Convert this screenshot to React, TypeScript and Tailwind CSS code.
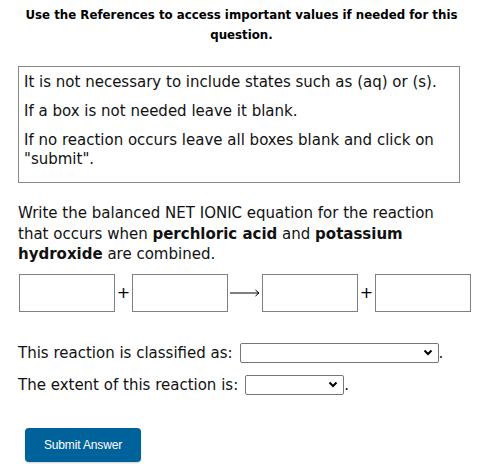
import React from 'react';

const Box = () => (
  <div className="w-[96px] h-[38px] border border-[#808080] bg-white shrink-0" />
);

const Plus = () => (
  <span className="w-[17px] text-center text-[16px] leading-none text-black">+</span>
);

const Chevron = () => (
  <svg width="10" height="7" viewBox="0 0 10 7">
    <path d="M1.5 1.5 L5 5 L8.5 1.5" stroke="#000" strokeWidth="2" fill="none" />
  </svg>
);

export default function App() {
  return (
    <div className="w-[483px] h-[473px] bg-white text-[#111] font-['DejaVu_Sans',Verdana,sans-serif] overflow-hidden">
      {/* header */}
      <p className="pt-[5px] px-3 text-center text-[11.8px] font-bold leading-[20px] text-black">
        Use the References to access important values if needed for this question.
      </p>

      {/* instructions */}
      <div className="mt-[21px] ml-[18px] w-[442px] h-[117px] border border-[#888] px-[5px] pt-[6px] text-[15px] leading-[19px]">
        <p>It is not necessary to include states such as (aq) or (s).</p>
        <p className="mt-[10px]">If a box is not needed leave it blank.</p>
        <p className="mt-[10px]">If no reaction occurs leave all boxes blank and click on "submit".</p>
      </div>

      {/* question */}
      <p className="mt-[20px] ml-[18px] w-[440px] text-[15px] leading-[20.5px]">
        Write the balanced NET IONIC equation for the reaction that occurs when{' '}
        <b>perchloric acid</b> and <b>potassium hydroxide</b> are combined.
      </p>

      {/* equation */}
      <div className="mt-[9px] ml-[19px] flex items-center">
        <Box />
        <Plus />
        <Box />
        <svg width="34" height="10" viewBox="0 0 34 10">
          <path d="M2 5 H31 M27.5 2 L31 5 L27.5 8" stroke="#000" strokeWidth="1" fill="none" />
        </svg>
        <Box />
        <Plus />
        <Box />
      </div>

      {/* selects */}
      <div className="mt-[31px] ml-[18px] text-[15px] leading-[20px] flex items-center">
        <span>This reaction is classified as:</span>
        <div className="ml-[7px] w-[199px] h-[20px] border border-[#767676] rounded-[2px] flex items-center justify-end pr-[5px]">
          <Chevron />
        </div>
        <span>.</span>
      </div>
      <div className="mt-[12px] ml-[18px] text-[15px] leading-[20px] flex items-center">
        <span>The extent of this reaction is:</span>
        <div className="ml-[7px] w-[99px] h-[20px] border border-[#767676] rounded-[2px] flex items-center justify-end pr-[5px]">
          <Chevron />
        </div>
        <span>.</span>
      </div>

      {/* submit */}
      <button className="mt-[33px] ml-[25px] w-[116px] h-[34px] rounded-[4px] bg-[#00629b] text-white text-[12px] tracking-[-0.15px] font-['Liberation_Sans',Arial,sans-serif] shadow-[0_1px_2px_rgba(0,0,0,0.2)]">
        Submit Answer
      </button>
    </div>
  );
}
